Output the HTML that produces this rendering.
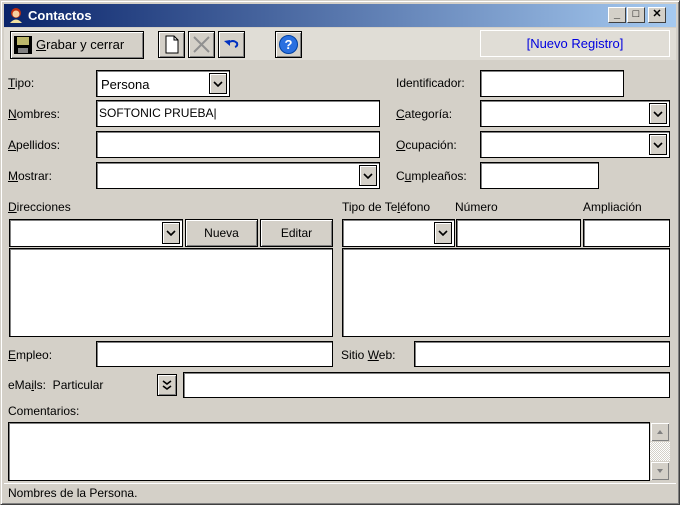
<!DOCTYPE html>
<html><head><meta charset="utf-8"><style>
*{margin:0;padding:0;box-sizing:border-box}
body{width:680px;height:505px;background:#d4d0c8;font-family:"Liberation Sans",sans-serif;font-size:12px;color:#000;position:relative;overflow:hidden}
.a{position:absolute}
.win{left:0;top:0;width:680px;height:505px;border:1px solid;border-color:#d4d0c8 #404040 #404040 #d4d0c8;box-shadow:inset 1px 1px #fff,inset -1px -1px #808080}
.tb{left:4px;top:4px;width:672px;height:23px;background:linear-gradient(90deg,#0a246a,#a6caf0)}
.ttl{left:28px;top:8px;color:#fff;font-weight:bold;font-size:13px}
.wb{top:7px;width:18px;height:16px;background:#d4d0c8;border:1px solid;border-color:#fff #404040 #404040 #fff;font-weight:bold;font-size:11px;text-align:center;line-height:13px}
.bar{left:4px;top:28px;width:672px;height:32px;background:#e0ddd6}
.btn{border:1px solid #000;box-shadow:inset 1px 1px #fff,inset -1px -1px #808080;background:#d4d0c8;text-align:center}
.in{background:#fff;border:1px solid #000;box-shadow:inset 1px 1px #808080}
.dd{position:absolute;right:2px;top:2px;width:18px;bottom:2px;background:#d4d0c8;border:1px solid #000;box-shadow:inset 1px 1px #fff;display:flex;align-items:center;justify-content:center}
.l{font-size:12px}
u{text-decoration:underline}
</style></head><body>
<div class="a win"></div>
<div class="a tb"></div>
<div class="a" style="left:8px;top:7px;width:16px;height:17px"><svg width="16" height="17"><circle cx="8" cy="6" r="5" fill="#c03010"/><circle cx="8" cy="7" r="3.5" fill="#f8d0a0"/><path d="M2 16 Q8 9 14 16Z" fill="#f0e0a0"/></svg></div>
<div class="a ttl">Contactos</div>
<div class="a wb" style="left:608px">_</div>
<div class="a wb" style="left:627px">□</div>
<div class="a wb" style="left:648px">✕</div>
<div class="a bar"></div>
<div class="a btn" style="left:10px;top:31px;width:134px;height:28px;line-height:26px;font-size:13px;text-align:left;padding-left:25px"><u>G</u>rabar y cerrar</div>
<svg class="a" style="left:13px;top:35px" width="20" height="20"><rect x="1" y="1" width="18" height="18" fill="#000"/><rect x="4" y="2" width="12" height="8" fill="#bdb76b"/><rect x="5" y="13" width="10" height="5" fill="#808080"/></svg>
<div class="a btn" style="left:158px;top:31px;width:27px;height:27px"><svg width="25" height="25"><path d="M7 4h8l4 4v13H7Z" fill="#fff" stroke="#000"/><path d="M15 4v4h4" fill="none" stroke="#000"/></svg></div>
<div class="a btn" style="left:188px;top:31px;width:27px;height:27px"><svg width="25" height="25"><path d="M5 5L20 20M20 5L5 20" stroke="#909090" stroke-width="2"/></svg></div>
<div class="a btn" style="left:218px;top:31px;width:27px;height:27px"><svg width="25" height="25"><path d="M9 11 Q14 7 18 11 Q19 14 16 15" fill="none" stroke="#0030c0" stroke-width="2"/><path d="M5 9l6 5v-6z" fill="#0030c0"/></svg></div>
<div class="a btn" style="left:275px;top:31px;width:27px;height:27px"><svg width="25" height="25"><circle cx="12.5" cy="12.5" r="9" fill="#2a70e0" stroke="#0040a0"/><text x="12.5" y="17" fill="#fff" font-size="13" font-weight="bold" text-anchor="middle" font-family="Liberation Sans">?</text></svg></div>
<div class="a" style="left:480px;top:30px;width:190px;height:27px;border:1px solid #fff;color:#0000e0;text-align:center;line-height:25px;font-size:13px">[Nuevo Registro]</div>

<div class="a l" style="left:8px;top:76px"><u>T</u>ipo:</div>
<div class="a in" style="left:96px;top:70px;width:134px;height:27px;padding:6px 4px;font-size:13px">Persona<div class="dd"><svg width="10" height="6"><path d="M1 1l4 4 4-4" fill="none" stroke="#000" stroke-width="1.6"/></svg></div></div>
<div class="a l" style="left:396px;top:76px">Identificador:</div>
<div class="a in" style="left:480px;top:70px;width:144px;height:27px"></div>

<div class="a l" style="left:8px;top:107px"><u>N</u>ombres:</div>
<div class="a in" style="left:96px;top:100px;width:284px;height:27px;padding:5px 2px">SOFTONIC PRUEBA|</div>
<div class="a l" style="left:396px;top:107px"><u>C</u>ategoría:</div>
<div class="a in" style="left:480px;top:100px;width:190px;height:27px"><div class="dd"><svg width="10" height="6"><path d="M1 1l4 4 4-4" fill="none" stroke="#000" stroke-width="1.6"/></svg></div></div>

<div class="a l" style="left:8px;top:138px"><u>A</u>pellidos:</div>
<div class="a in" style="left:96px;top:131px;width:284px;height:27px"></div>
<div class="a l" style="left:396px;top:138px"><u>O</u>cupación:</div>
<div class="a in" style="left:480px;top:131px;width:190px;height:27px"><div class="dd"><svg width="10" height="6"><path d="M1 1l4 4 4-4" fill="none" stroke="#000" stroke-width="1.6"/></svg></div></div>

<div class="a l" style="left:8px;top:169px"><u>M</u>ostrar:</div>
<div class="a in" style="left:96px;top:162px;width:284px;height:27px"><div class="dd"><svg width="10" height="6"><path d="M1 1l4 4 4-4" fill="none" stroke="#000" stroke-width="1.6"/></svg></div></div>
<div class="a l" style="left:396px;top:169px">C<u>u</u>mpleaños:</div>
<div class="a in" style="left:480px;top:162px;width:119px;height:27px"></div>

<div class="a l" style="left:8px;top:200px"><u>D</u>irecciones</div>
<div class="a l" style="left:342px;top:200px">Tipo de Te<u>l</u>éfono</div>
<div class="a l" style="left:455px;top:200px">Número</div>
<div class="a l" style="left:583px;top:200px">Ampliación</div>
<div class="a in" style="left:9px;top:219px;width:174px;height:28px"><div class="dd"><svg width="10" height="6"><path d="M1 1l4 4 4-4" fill="none" stroke="#000" stroke-width="1.6"/></svg></div></div>
<div class="a btn" style="left:185px;top:219px;width:73px;height:28px;line-height:26px">Nueva</div>
<div class="a btn" style="left:260px;top:219px;width:73px;height:28px;line-height:26px">Editar</div>
<div class="a in" style="left:342px;top:219px;width:113px;height:28px"><div class="dd"><svg width="10" height="6"><path d="M1 1l4 4 4-4" fill="none" stroke="#000" stroke-width="1.6"/></svg></div></div>
<div class="a in" style="left:456px;top:219px;width:125px;height:28px"></div>
<div class="a in" style="left:583px;top:219px;width:87px;height:28px"></div>
<div class="a in" style="left:9px;top:248px;width:324px;height:89px"></div>
<div class="a in" style="left:342px;top:248px;width:328px;height:89px"></div>

<div class="a l" style="left:8px;top:348px"><u>E</u>mpleo:</div>
<div class="a in" style="left:96px;top:341px;width:237px;height:26px"></div>
<div class="a l" style="left:341px;top:348px">Sitio <u>W</u>eb:</div>
<div class="a in" style="left:414px;top:341px;width:256px;height:26px"></div>

<div class="a l" style="left:8px;top:378px">eMa<u>i</u>ls:&nbsp; Particular</div>
<div class="a btn" style="left:157px;top:374px;width:20px;height:22px"><svg width="18" height="20"><path d="M5 6l4 3 4-3M5 11l4 3 4-3" fill="none" stroke="#000" stroke-width="1.6"/></svg></div>
<div class="a in" style="left:183px;top:372px;width:487px;height:26px"></div>

<div class="a l" style="left:8px;top:404px">Comentarios:</div>
<div class="a in" style="left:8px;top:422px;width:642px;height:59px"></div>
<div class="a" style="left:650px;top:422px;width:20px;height:59px;background:repeating-conic-gradient(#fff 0 25%,#d4d0c8 0 50%) 0 0/2px 2px"></div>
<div class="a btn" style="left:650px;top:422px;width:20px;height:20px;border-color:#d4d0c8"><svg width="18" height="18"><path d="M6 11h6l-3-4z" fill="#808080"/></svg></div>
<div class="a btn" style="left:650px;top:461px;width:20px;height:20px;border-color:#d4d0c8"><svg width="18" height="18"><path d="M6 7h6l-3 4z" fill="#808080"/></svg></div>
<div class="a" style="left:4px;top:483px;width:672px;height:1px;background:#fff"></div>
<div class="a l" style="left:8px;top:486px">Nombres de la Persona.</div>
</body></html>
